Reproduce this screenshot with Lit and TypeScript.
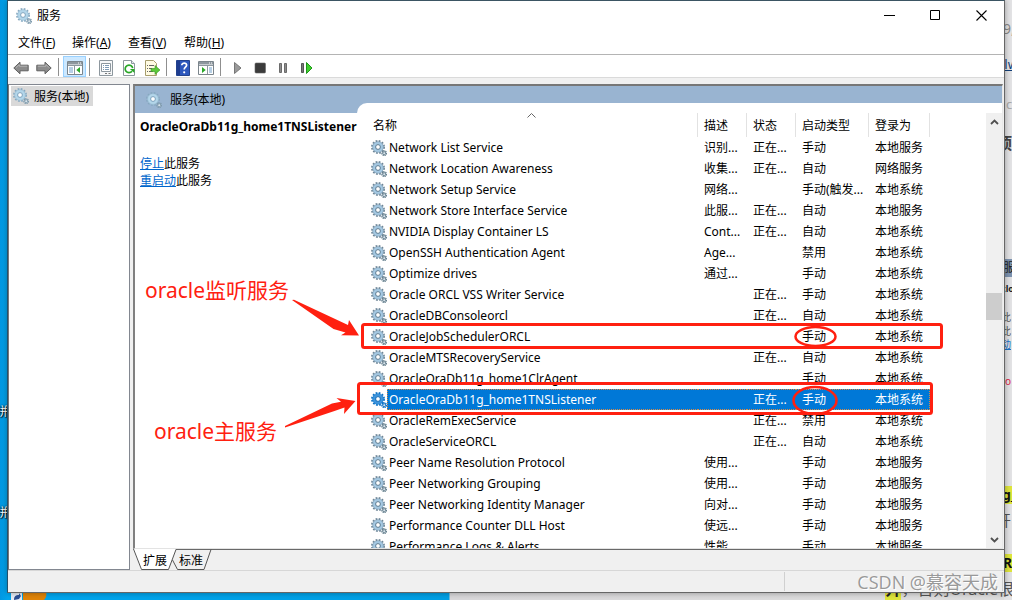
import { LitElement, html, css, svg, nothing } from "lit";
import { customElement } from "lit/decorators.js";
import { classMap } from "lit/directives/class-map.js";

interface Service {
  name: string;
  desc: string;
  status: string;
  startup: string;
  account: string;
}

const RUN = "正在...";
const SERVICES: Service[] = [
  ["Network List Service", "识别...", RUN, "手动", "本地服务"],
  ["Network Location Awareness", "收集...", RUN, "自动", "网络服务"],
  ["Network Setup Service", "网络...", "", "手动(触发...", "本地系统"],
  ["Network Store Interface Service", "此服...", RUN, "自动", "本地服务"],
  ["NVIDIA Display Container LS", "Cont...", RUN, "自动", "本地系统"],
  ["OpenSSH Authentication Agent", "Age...", "", "禁用", "本地系统"],
  ["Optimize drives", "通过...", "", "手动", "本地系统"],
  ["Oracle ORCL VSS Writer Service", "", RUN, "手动", "本地系统"],
  ["OracleDBConsoleorcl", "", RUN, "自动", "本地系统"],
  ["OracleJobSchedulerORCL", "", "", "手动", "本地系统"],
  ["OracleMTSRecoveryService", "", RUN, "自动", "本地系统"],
  ["OracleOraDb11g_home1ClrAgent", "", "", "手动", "本地系统"],
  ["OracleOraDb11g_home1TNSListener", "", RUN, "手动", "本地系统"],
  ["OracleRemExecService", "", RUN, "禁用", "本地系统"],
  ["OracleServiceORCL", "", RUN, "自动", "本地系统"],
  ["Peer Name Resolution Protocol", "使用...", "", "手动", "本地服务"],
  ["Peer Networking Grouping", "使用...", "", "手动", "本地服务"],
  ["Peer Networking Identity Manager", "向对...", "", "手动", "本地服务"],
  ["Performance Counter DLL Host", "使远...", "", "手动", "本地服务"],
  ["Performance Logs & Alerts", "性能...", "", "手动", "本地服务"],
].map(([name, desc, status, startup, account]) => ({ name, desc, status, startup, account }));

const SELECTED = "OracleOraDb11g_home1TNSListener";

const gear = (tone: "normal" | "soft" | "selected" = "normal") => {
  const c = {
    normal: ["#6c8496", "#a4c8e2", "#57788f", "#66808f"],
    soft: ["#86a8c0", "#b3d6ea", "#7da3be", "#7f9bad"],
    selected: ["#0a70c4", "#3d94dc", "#0764b3", "#0a70c4"],
  }[tone];
  return html`<svg class="gear" viewBox="0 0 16 16" width="16" height="16" aria-hidden="true">
    <circle cx="7" cy="7" r="5.900" fill="none" stroke=${c[0]} stroke-width="2.100" stroke-dasharray="1.750 1.339" />
    <circle cx="7" cy="7" r="4" fill="none" stroke=${c[1]} stroke-width="3.200" />
    <circle cx="7" cy="7" r="5.300" fill="none" stroke=${c[0]} stroke-width=".5" opacity=".7" />
    <circle cx="7" cy="7" r="2.400" fill="#fff" stroke=${c[2]} stroke-width="1" />
    <circle cx="13.200" cy="13.200" r="2.200" fill="none" stroke=${c[3]} stroke-width="1.500" stroke-dasharray="1.100 .628" />
    <circle cx="13.200" cy="13.200" r="1.500" fill="#d7e4ec" stroke=${c[3]} stroke-width=".9" />
  </svg>`;
};

const icon = (body: unknown) =>
  html`<svg viewBox="0 0 16 16" width="16" height="16" aria-hidden="true">${body}</svg>`;

const paneFrame = svg`<path d="M.5 1.5h15v13H.5z" fill="#fff" stroke="#7b858c"/>
  <path d="M1 2h14v2.5H1z" fill="#8d979e"/><path d="M1 5.5h14" stroke="#8d979e"/>
  <path d="M11 3h1M13 3h1" stroke="#fff"/>`;

const ICONS = {
  back: icon(svg`<path d="M.8 8 7 2.2v3h8.2v5.6H7v3z" fill="#8c8c8c" stroke="#5f5f5f"/><path d="M3 7.6 6.3 4.6v1.6h8" fill="none" stroke="#b5b5b5"/>`),
  forward: icon(svg`<path d="M15.2 8 9 2.2v3H.8v5.6H9v3z" fill="#8c8c8c" stroke="#5f5f5f"/><path d="M1.8 6.2H10V4.6l3 3" fill="none" stroke="#b5b5b5"/>`),
  tree: icon(svg`${paneFrame}<path d="M7.5 6v8" stroke="#8d979e"/><path d="M2 8h4M2 10h4M2 12h4" stroke="#6e9fca"/><path d="M13 7v6L9.3 10z" fill="#2aa728"/>`),
  props: icon(svg`<path d="M1.5.5h13v15h-13z" fill="#f7f8f9" stroke="#8d979e"/><path d="M3.500 3.500h9v8h-9z" fill="#fff" stroke="#8d979e"/><path d="M5 5.500h1M7 5.500h4M5 7.500h1M7 7.500h4M5 9.500h1M7 9.500h4" stroke="#7f9bb5"/><path d="M7 13.500h2M10.500 13.500h2" stroke="#777"/>`),
  refresh: icon(svg`<path d="M2.5.5h8l3 3v12h-11z" fill="#fff" stroke="#8d979e"/><path d="M10.500.5v3h3" fill="#e5e9ec" stroke="#8d979e"/><path d="M11 11.200a3.800 3.800 0 1 1 .7-3" fill="none" stroke="#2aa728" stroke-width="1.700"/><path d="M8.800 9h4.700v4z" fill="#2aa728"/>`),
  exportList: icon(svg`<path d="M1.500.5h8l3 3v12h-11z" fill="#fffbe2" stroke="#a79d6c"/><path d="M3 5.500h1M5 5.500h5M3 8.500h1M5 8.500h3M3 11.500h1M5 11.500h4" stroke="#666"/><path d="M7 8.500h4V5.500L16 10l-5 4.500v-3H7z" fill="#5cc93a" stroke="#389421" stroke-width=".6"/>`),
  help: icon(svg`<path d="M1.500.500h13v15h-13z" fill="#2c57bd" stroke="#22428d"/><path d="M2 1h3v14H2z" fill="#1d3c8f"/><path d="M6.800 5.300c0-3 5-2.900 4.800 0-.1 1.900-2.400 2-2.400 4.200" fill="none" stroke="#fff" stroke-width="1.700"/><circle cx="9.200" cy="12.300" r="1.100" fill="#fff"/>`),
  actions: icon(svg`${paneFrame}<path d="M9.500 6v8" stroke="#8d979e"/><path d="M11 8h3M11 10h3M11 12h3" stroke="#6e9fca"/><path d="M4 7v6l3.700-3z" fill="#2aa728"/>`),
  play: icon(svg`<path d="M5.500 2.500v11l6.500-5.500z" fill="#9a9a9a" stroke="#777"/>`),
  stop: icon(svg`<rect x="3" y="3" width="10.500" height="10" rx="1" fill="#3b3b3b" stroke="#666" stroke-width=".6"/>`),
  pause: icon(svg`<path d="M4.500 3.500h2v9h-2zM9.500 3.500h2v9h-2z" fill="#8d8d8d" stroke="#6b6b6b"/>`),
  restart: icon(svg`<path d="M3.500 3.500h2v9h-2z" fill="#777" stroke="#555"/><path d="M8.500 2.500v11l5.500-5.500z" fill="#3fd02d" stroke="#1f971a"/>`),
};

const TOOLBAR: [string, unknown, boolean?][][] = [
  [["后退", ICONS.back], ["前进", ICONS.forward]],
  [["显示/隐藏控制台树", ICONS.tree, true]],
  [["属性", ICONS.props], ["刷新", ICONS.refresh], ["导出列表", ICONS.exportList]],
  [["帮助", ICONS.help], ["显示/隐藏操作窗格", ICONS.actions]],
  [["启动服务", ICONS.play], ["停止服务", ICONS.stop], ["暂停服务", ICONS.pause], ["重启动服务", ICONS.restart]],
];

const base = css`
  * { box-sizing: border-box; }
  button {
    font: inherit; color: inherit; background: none; border: 0; padding: 0; margin: 0;
    display: flex; align-items: center; justify-content: center;
  }
  svg { display: block; flex: none; }
`;

@customElement("service-table")
export class ServiceTable extends LitElement {
  static styles = [base, css`
    :host { display: block; min-width: 0; overflow: hidden; }
    table { table-layout: fixed; width: 100%; border-collapse: separate; border-spacing: 0; }
    .c-name { width: 333px; }
    .c-short { width: 49px; }
    .c-start { width: 73px; }
    .c-account { width: 61px; }
    th { font-weight: 400; text-align: left; height: 24px; padding: 0 0 0 6px; border-right: 1px solid #e2e2e2; position: relative; white-space: nowrap; }
    th.first { padding-left: 8px; }
    .caret { position: absolute; left: 50%; top: 0; margin-left: -4px; }
    td { height: 21px; line-height: 18px; padding: 0 0 0 6px; white-space: nowrap; overflow: hidden; }
    .entry { display: flex; align-items: center; height: 21px; }
    .label { flex: 1; padding-left: 2px; line-height: 21px; height: 21px; }
    .selected .label, .selected td.cell { background: #0078d7; color: #fff; }
    .selected .label { line-height: 19px; border: 1px dotted #d98a45; border-right: 0; padding-left: 1px; }
    .selected td.cell { border: 1px dotted #d98a45; border-width: 1px 0; }
    .selected td.last { border-right-width: 1px; }
  `];

  render() {
    return html`<table>
      <colgroup>
        <col class="c-name" /><col class="c-short" /><col class="c-short" />
        <col class="c-start" /><col class="c-account" /><col />
      </colgroup>
      <thead>
        <tr>
          <th class="first" scope="col">名称
            <svg class="caret" viewBox="0 0 9 5" width="9" height="5" aria-hidden="true"><path d="M.5 4.500l4-4 4 4" fill="none" stroke="#666" /></svg>
          </th>
          <th scope="col">描述</th><th scope="col">状态</th><th scope="col">启动类型</th><th scope="col">登录为</th><td></td>
        </tr>
      </thead>
      <tbody>
        ${SERVICES.map((s) => {
          const sel = s.name === SELECTED;
          return html`<tr class=${classMap({ selected: sel })} aria-selected=${sel ? "true" : nothing}>
            <td class="name"><div class="entry">${gear(sel ? "selected" : "normal")}<span class="label">${s.name}</span></div></td>
            <td class="cell">${s.desc}</td>
            <td class="cell">${s.status}</td>
            <td class="cell">${s.startup}</td>
            <td class="cell last">${s.account}</td>
            <td></td>
          </tr>`;
        })}
      </tbody>
    </table>`;
  }
}

@customElement("app-root")
export class AppRoot extends LitElement {
  static styles = [base, css`
    :host {
      display: block; position: relative; height: 100vh; overflow: hidden;
      font: 12px/17px "Noto Sans", "Noto Sans CJK SC", sans-serif; color: #000;
      background: linear-gradient(90deg, #0097e2, #00a6ee 8px, #009fe4 449px, #d9d8da 450px, #dedede);
    }
    .shortcut { position: absolute; left: -4px; top: 403px; color: #fff; text-shadow: 1px 1px 1px #000, 0 0 2px #000; }
    .shortcut.second { top: 504px; }
    .desk-icon { position: absolute; left: 10px; bottom: 0; }
    .article { position: absolute; inset: 0 0 0 auto; width: 8px; background: #e3e3e5; overflow: hidden; }
    .scrap { position: absolute; left: -3px; white-space: nowrap; color: #555; line-height: 18px; }
    .s1 { top: 20px; left: -1px; font-size: 14px; color: #888; }
    .s2 { top: 55px; font-size: 13px; color: #123f78; text-decoration: underline; }
    .s3 { top: 95px; left: 2px; font-size: 13px; color: #aaa; }
    .s4 { top: 134px; left: -8px; font-size: 16px; font-weight: 700; color: #444; }
    .s5 { top: 259px; left: -1px; width: 12px; background: #7d93b0; color: #222; }
    .s6 { top: 280px; font-size: 9px; font-weight: 700; color: #222; }
    .s7 { top: 308px; font-size: 10px; }
    .s8 { top: 322px; font-size: 10px; }
    .s9 { top: 335px; font-size: 10px; color: #1b72c8; text-decoration: underline; }
    .s10 { top: 372px; left: 1px; font-size: 10px; color: #d24; }
    .s11 { top: 486px; left: -2px; font-size: 14px; font-weight: 700; color: #111; background: #dfe63c; }
    .s12 { top: 511px; left: -8px; font-size: 15px; }
    .s13 { top: 554px; left: -1px; font-size: 14px; font-weight: 700; color: #111; background: #dfe63c; }
    .footline { position: absolute; right: -2px; bottom: 0; margin: 0; font-size: 16px; line-height: 22px; color: #555; white-space: nowrap; }
    .footline mark { background: #dfe63c; color: #222; font-weight: 700; }

    .window {
      position: absolute; inset: 0 7px 7px 7px; display: flex; flex-direction: column;
      border: 1px solid #666; border-left-color: #24506b; border-top-color: #3b5563;
      background: #f0f0f0; box-shadow: 0 0 6px rgba(0, 0, 0, .35);
    }
    .title { display: flex; align-items: center; height: 29px; background: #fff; padding-left: 8px; gap: 5px; flex: none; }
    .title h1 { margin: 0; font-size: 12px; font-weight: 400; flex: 1; }
    .caption { display: flex; align-self: stretch; }
    .caption button { width: 46px; }
    .menu { display: flex; background: #fff; height: 25px; padding: 1px 1px 0 2px; border-bottom: 1px solid #b4b4b4; flex: none; }
    .menu button { padding: 0 8px; min-width: 56px; justify-content: flex-start; }
    .menu button:first-child { min-width: 54px; }
    .toolbar { display: flex; background: #fff; height: 23px; padding: 1px 0 0 1px; border-bottom: 1px solid #dadada; flex: none; }
    .group { display: flex; }
    .group + .group::before { content: ""; width: 8px; background: linear-gradient(#8f8f8f, #8f8f8f) 3px 2px / 1px 18px no-repeat; }
    .toolbar button { width: 23px; padding-top: 2px; }
    .toolbar button.on { background: #cce8ff; border: 1px solid #99d1ff; }

    .body { flex: 1; min-height: 0; display: flex; gap: 3px; padding-top: 6px; }
    .tree { width: 122px; flex: none; background: #fff; border: 1px solid #828790; border-left-color: #777; padding: 1px 2px; }
    .tree button { background: #d9d9d9; height: 20px; padding: 0 4px 0 2px; gap: 5px; }
    .right { flex: 1; min-width: 0; display: flex; flex-direction: column; }
    .pane {
      flex: 1; min-height: 0; display: grid; background: #fff; margin-right: 1px;
      grid-template: 17px 10px minmax(0, 1fr) / 222px minmax(0, 1fr);
      border: solid #696969; border-width: 2px 1px 1px 2px; border-top-color: #777; border-right-color: #e8e8e8; border-bottom-color: #e3e3e3; border-left-color: #808080;
    }
    .band { grid-area: 1 / 1 / 3 / 3; background: #99b4d1; display: flex; align-items: center; gap: 8px; padding-left: 11px; }
    .band h2 { margin: 0; font-size: 12px; font-weight: 400; }
    .detail { grid-area: 3 / 1; padding: 5px 0 0 5px; }
    .detail h3 { margin: 0 0 20px; font-size: 12px; line-height: 17px; white-space: nowrap; position: relative; z-index: 1; }
    .detail p { margin: 0; line-height: 17px; }
    .detail a { color: #0066cc; }
    .list { grid-area: 2 / 2 / 4 / 3; background: #fff; border-top-left-radius: 10px; display: flex; padding: 10px 0 0 8px; min-height: 0; }
    service-table { flex: 1; }
    .scroll { width: 16px; flex: none; background: #f0f0f0; display: flex; flex-direction: column; align-items: stretch; }
    .scroll button { height: 17px; }
    .track { flex: 1; display: flex; flex-direction: column; }
    .track::before { content: ""; flex: 163; }
    .thumb { height: 27px; background: #cdcdcd; }
    .track::after { content: ""; flex: 210; }
    .tabs { height: 21px; display: flex; flex: none; position: relative; border-top: 1px solid #696969; }
    .tabs svg { position: absolute; left: 0; top: -1px; }
    .tabs button { position: relative; width: 36px; }
    .tabs button:first-of-type { width: 40px; padding-left: 4px; }
    .status { height: 22px; flex: none; border-top: 1px solid #d7d7d7; display: flex; justify-content: flex-end; padding: 1px 1px 1px 0; }
    .status span { width: 219px; border: solid #d0d0d0; border-width: 0 1px; }

    .marks { position: absolute; left: 0; top: 0; pointer-events: none; }
    .note { position: absolute; margin: 0; color: #ff2010; font-size: 21px; line-height: 28px; white-space: nowrap; }
    .note.listener { left: 145px; top: 276px; }
    .note.main { left: 154px; top: 417px; }
    .watermark {
      position: absolute; right: 14px; bottom: 6px; margin: 0; font-family: "Open Sans", "Noto Sans CJK SC", sans-serif;
      font-size: 18px; line-height: 24px; color: #999; text-shadow: 1px 1px 0 #fff; white-space: nowrap;
    }
  `];

  private renderDesktop() {
    const scraps = ["9,", "llw", "c", "顶", "服", "clo", "此", "此", "动", "o", "g_", "开", "R"];
    return html`
      <span class="shortcut">拼</span>
      <span class="shortcut second">拼</span>
      <svg class="desk-icon" viewBox="0 0 38 8" width="38" height="8" aria-hidden="true">
        <path d="M1 0h11v8H1z" fill="#e8eef6" /><path d="M4 8c0-4 2-5 5-5V1l2 3-2 3" fill="#2c4f94" />
        <path d="M13 0h23c1 3 0 6-2 8H13z" fill="#e08408" />
      </svg>
      <div class="article">${scraps.map((t, i) => html`<span class="scrap s${i + 1}">${t}</span>`)}</div>
      <p class="footline"><mark>升</mark>，否则Oracle很</p>`;
  }

  private renderChrome() {
    const menus = [["文件", "F"], ["操作", "A"], ["查看", "V"], ["帮助", "H"]];
    return html`
      <header class="title">
        ${gear("soft")}
        <h1>服务</h1>
        <div class="caption">
          <button aria-label="最小化"><svg viewBox="0 0 11 11" width="11" height="11"><path d="M0 5.500h11" stroke="#000" /></svg></button>
          <button aria-label="最大化"><svg viewBox="0 0 11 11" width="11" height="11"><path d="M.5.5h9v9h-9z" fill="none" stroke="#000" /></svg></button>
          <button aria-label="关闭"><svg viewBox="0 0 11 11" width="11" height="11"><path d="M.5.5l10 10M10.500.5l-10 10" stroke="#000" stroke-width="1.100" /></svg></button>
        </div>
      </header>
      <nav class="menu">${menus.map(([t, k]) => html`<button><span>${t}(<u>${k}</u>)</span></button>`)}</nav>
      <div class="toolbar" role="toolbar">
        ${TOOLBAR.map((g) => html`<div class="group">
          ${g.map(([label, glyph, on]) => html`<button class=${classMap({ on: !!on })} aria-label=${label}>${glyph}</button>`)}
        </div>`)}
      </div>`;
  }

  private renderMarks() {
    return html`
      <svg class="marks" viewBox="0 0 1012 600" width="1012" height="600" aria-hidden="true">
        <g fill="none" stroke="#ff2010" stroke-width="3">
          <rect x="362.500" y="324.500" width="579" height="23" rx="2" />
          <rect x="358.500" y="383.500" width="573" height="30" rx="2" />
          <ellipse cx="815.500" cy="336.500" rx="20" ry="9.500" stroke-width="2.500" />
          <ellipse cx="815" cy="400.500" rx="21.500" ry="13.500" stroke-width="2.500" />
        </g>
        <g fill="#ff2010">
          <path d="M292 300l2-.3L348 325l1-5 10 15.500-18-.3 4.500-2.700-12-3.500z" />
          <path d="M285 427.500l0-1.500 47-22.500 9-1.800-4.500-3.700L355.500 401 344 414l.5-6.500-10 3.500z" />
        </g>
      </svg>
      <p class="note listener">oracle监听服务</p>
      <p class="note main">oracle主服务</p>
      <p class="watermark">CSDN @慕容天成</p>`;
  }

  render() {
    return html`
      ${this.renderDesktop()}
      <main class="window">
        ${this.renderChrome()}
        <div class="body">
          <nav class="tree"><button>${gear("soft")}<span>服务(本地)</span></button></nav>
          <section class="right">
            <div class="pane">
              <div class="band">${gear("soft")}<h2>服务(本地)</h2></div>
              <div class="detail">
                <h3>${SELECTED}</h3>
                <p><a href="#stop">停止</a>此服务</p>
                <p><a href="#restart">重启动</a>此服务</p>
              </div>
              <div class="list">
                <service-table></service-table>
                <div class="scroll">
                  <button aria-label="向上滚动"><svg viewBox="0 0 9 6" width="9" height="6"><path d="M1 5l3.500-3.500L8 5" fill="none" stroke="#505050" stroke-width="1.800" /></svg></button>
                  <div class="track"><div class="thumb"></div></div>
                  <button aria-label="向下滚动"><svg viewBox="0 0 9 6" width="9" height="6"><path d="M1 1l3.500 3.500L8 1" fill="none" stroke="#505050" stroke-width="1.800" /></svg></button>
                </div>
              </div>
            </div>
            <div class="tabs">
              <svg viewBox="0 0 80 22" width="80" height="22" aria-hidden="true">
                <path d="M0 0l8 20.500h27L43 0z" fill="#fff" />
                <path d="M.5 0l8 20.500h27L43 .5" fill="none" stroke="#555" />
                <path d="M39.500 11l5 9.500H71L78 .5" fill="none" stroke="#555" />
              </svg>
              <button>扩展</button><button>标准</button>
            </div>
          </section>
        </div>
        <footer class="status"><span></span></footer>
      </main>
      ${this.renderMarks()}`;
  }
}
